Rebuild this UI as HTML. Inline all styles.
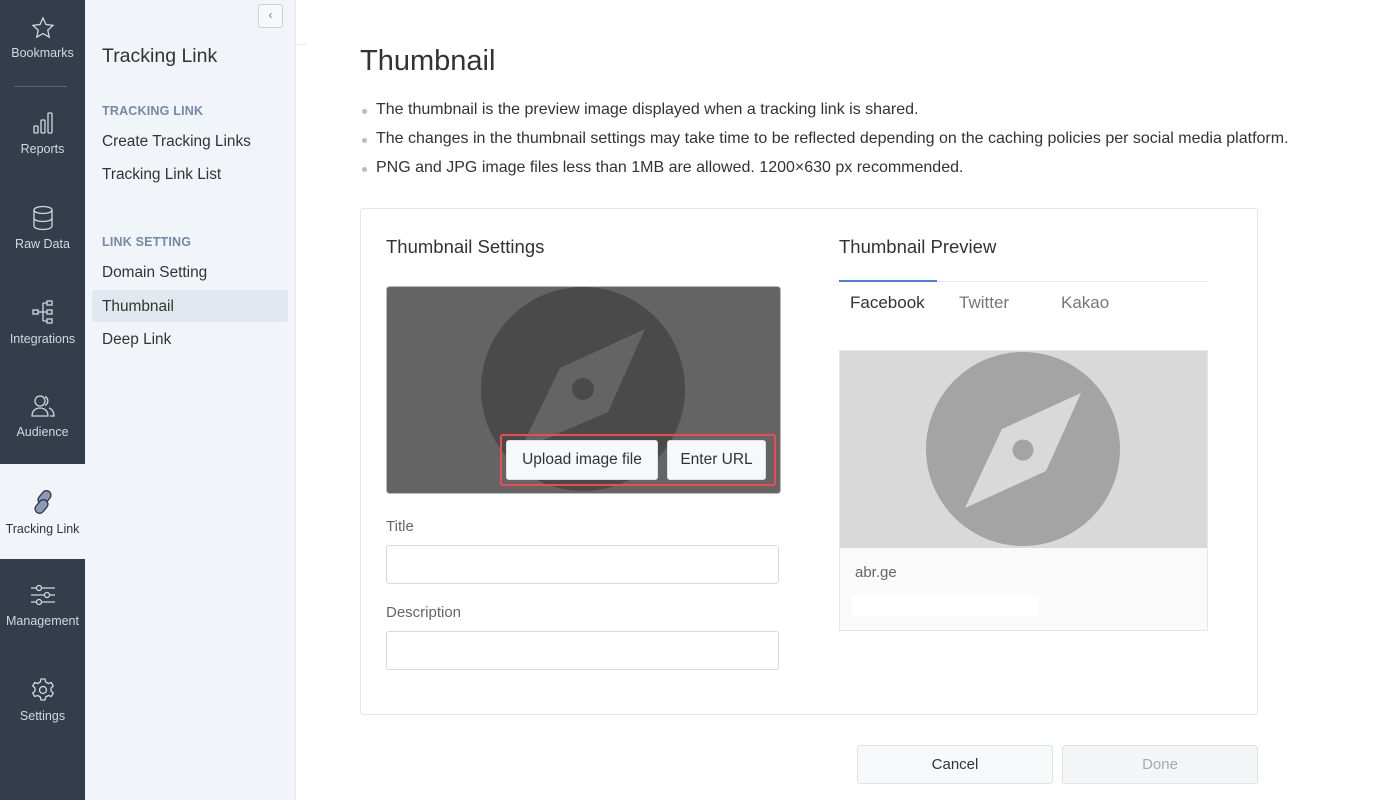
<!DOCTYPE html>
<html><head><meta charset="utf-8"><style>
*{box-sizing:border-box;margin:0;padding:0}
body{width:1400px;height:800px;overflow:hidden;font-family:"Liberation Sans",sans-serif;background:#fff;position:relative;color:#333}
.side{position:absolute;left:0;top:0;width:85px;height:800px;background:#333d4b}
.it{position:absolute;left:0;width:85px;text-align:center;color:#d3d8df;font-size:12.5px}
.it svg{display:block;margin:0 auto 6px}
.act{background:#f1f4f8;color:#333}
.sub{position:absolute;left:85px;top:0;width:211px;height:800px;background:#f1f4f8;border-right:1px solid #e4e8ee}
.sub .h{position:absolute;left:17px;top:45px;font-size:19.5px;color:#333}
.sub .cat{position:absolute;left:17px;font-size:12.5px;color:#7489a8;font-weight:bold;letter-spacing:.2px}
.sub .l{position:absolute;left:17px;font-size:15.4px;color:#333}
.sub .sel{position:absolute;left:7px;top:290px;width:196px;height:32px;background:#e2e8ef;border-radius:3px}
.col{position:absolute;left:258px;top:4px;width:25px;height:24px;border:1px solid #ccd2da;border-radius:3px;background:#f6f8fa;color:#777;font-size:12px;text-align:center;line-height:21px}
h1{position:absolute;left:360px;top:45px;font-size:29px;font-weight:normal;color:#333}
ul{position:absolute;left:360px;top:101px;list-style:none;font-size:16px;color:#333}
ul li{height:29.2px;padding-left:16px;position:relative}
ul li:before{content:"";position:absolute;left:2px;top:8px;width:5px;height:5px;border-radius:50%;background:#bbb}
.card{position:absolute;left:360px;top:208px;width:898px;height:507px;border:1px solid #e3e6ea;border-radius:3px}
.t{position:absolute;font-size:18.5px;color:#333}
.lab{position:absolute;left:386px;font-size:15px;color:#666}
.inp{position:absolute;left:386px;width:393px;height:39px;border:1px solid #d6dae0;border-radius:3px}
.btn{position:absolute;height:40px;border:1px solid #dfe2e6;border-radius:3px;background:#f7f8fa;text-align:center;line-height:38px;font-size:15px}
</style></head><body>
<div class="side">
 <div class="it" style="top:16px"><svg width="24" height="24" viewBox="0 0 24 24" fill="none" stroke="#d3d8df" stroke-width="1.3"><path d="M12 2l3 6.5 7 .8-5.2 4.8 1.4 7L12 17.6 5.8 21.1l1.4-7L2 9.3l7-.8z"/></svg>Bookmarks</div>
 <div style="position:absolute;left:14px;top:86px;width:53px;height:1px;background:#5b6675"></div>
 <div class="it" style="top:110px"><svg width="26" height="26" viewBox="0 0 26 26" fill="none" stroke="#d3d8df" stroke-width="1.3"><rect x="4" y="16" width="4" height="7" rx="1"/><rect x="11" y="10" width="4" height="13" rx="1"/><rect x="18" y="3" width="4" height="20" rx="1"/></svg>Reports</div>
 <div class="it" style="top:205px"><svg width="24" height="26" viewBox="0 0 24 26" fill="none" stroke="#d3d8df" stroke-width="1.3"><ellipse cx="12" cy="5" rx="9" ry="3.5"/><path d="M3 5v16c0 2 4 3.5 9 3.5s9-1.5 9-3.5V5M3 13c0 2 4 3.5 9 3.5s9-1.5 9-3.5"/></svg>Raw Data</div>
 <div class="it" style="top:298px"><svg width="26" height="28" viewBox="0 0 26 28" fill="none" stroke="#d3d8df" stroke-width="1.3"><rect x="3" y="12" width="5" height="4"/><rect x="17" y="3" width="5" height="4"/><rect x="17" y="12" width="5" height="4"/><rect x="17" y="21" width="5" height="4"/><path d="M8 14h5M13 5v18M13 5h4M13 14h4M13 23h4"/></svg>Integrations</div>
 <div class="it" style="top:393px"><svg width="26" height="26" viewBox="0 0 26 26" fill="none" stroke="#d3d8df" stroke-width="1.3"><circle cx="10" cy="8" r="5"/><path d="M2 23c0-5 3.5-8 8-8s8 3 8 8z"/><path d="M15 3.5a5 5 0 0 1 0 9M19 15c3 1 5 4 5 8h-4"/></svg>Audience</div>
 <div class="it act" style="top:464px;height:95px;padding-top:24px"><svg width="28" height="28" viewBox="0 0 28 28"><g fill="#8a9bb5" stroke="#333d4b" stroke-width="1.4"><rect x="11" y="2" width="9" height="15" rx="4.5" transform="rotate(40 15.5 9.5)"/><rect x="8" y="11" width="9" height="15" rx="4.5" transform="rotate(40 12.5 18.5)"/></g></svg>Tracking Link</div>
 <div class="it" style="top:582px"><svg width="28" height="26" viewBox="0 0 28 26" fill="none" stroke="#d3d8df" stroke-width="1.3"><path d="M2 6h24M2 13h24M2 20h24"/><circle cx="10" cy="6" r="2.5" fill="#333d4b"/><circle cx="18" cy="13" r="2.5" fill="#333d4b"/><circle cx="10" cy="20" r="2.5" fill="#333d4b"/></svg>Management</div>
 <div class="it" style="top:677px"><svg width="26" height="26" viewBox="0 0 26 26" fill="none" stroke="#d3d8df" stroke-width="1.3"><path d="M11 2h4l.7 3 2.6 1.5 3-1 2 3.5-2.3 2v3l2.3 2-2 3.5-3-1-2.6 1.5-.7 3h-4l-.7-3-2.6-1.5-3 1-2-3.5 2.3-2v-3l-2.3-2 2-3.5 3 1L10.3 5z"/><circle cx="13" cy="13" r="3.5"/></svg>Settings</div>
</div>
<div class="sub">
 <div class="sel"></div>
 <div class="h">Tracking Link</div>
 <div class="cat" style="top:104px">TRACKING LINK</div>
 <div class="l" style="top:133px">Create Tracking Links</div>
 <div class="l" style="top:166px">Tracking Link List</div>
 <div class="cat" style="top:235px">LINK SETTING</div>
 <div class="l" style="top:264px">Domain Setting</div>
 <div class="l" style="top:298px">Thumbnail</div>
 <div class="l" style="top:331px">Deep Link</div>
</div>
<div class="col">&#8249;</div>
<div style="position:absolute;left:296px;top:44px;width:10px;height:1px;background:#e4e8ee"></div>
<h1>Thumbnail</h1>
<ul>
<li>The thumbnail is the preview image displayed when a tracking link is shared.</li>
<li>The changes in the thumbnail settings may take time to be reflected depending on the caching policies per social media platform.</li>
<li>PNG and JPG image files less than 1MB are allowed. 1200×630 px recommended.</li>
</ul>
<div class="card"></div>
<div class="t" style="left:386px;top:236px">Thumbnail Settings</div>
<div class="t" style="left:839px;top:236px">Thumbnail Preview</div>
<svg style="position:absolute;left:386px;top:286px" width="395" height="208">
 <rect x="0.5" y="0.5" width="394" height="207" rx="3" fill="#646464" stroke="#bbb"/>
 <circle cx="197" cy="103" r="102" fill="#4a4a4a"/>
 <polygon points="259,43 174,82 134,164 222,126" fill="#646464"/>
 <circle cx="197" cy="103" r="11" fill="#4a4a4a"/>
</svg>
<div style="position:absolute;left:500px;top:434px;width:276px;height:52px;border:2px solid #ee4b50;border-radius:3px"></div>
<div class="btn" style="left:506px;top:440px;width:152px;background:#f7f8fa;color:#333;font-size:15.5px">Upload image file</div>
<div class="btn" style="left:667px;top:440px;width:99px;color:#333;font-size:15.5px">Enter URL</div>
<div class="lab" style="top:518px">Title</div>
<div class="inp" style="top:545px"></div>
<div class="lab" style="top:604px">Description</div>
<div class="inp" style="top:631px"></div>
<div style="position:absolute;left:839px;top:281px;width:369px;height:1px;background:#e6e9ed"></div>
<div style="position:absolute;left:839px;top:280px;width:98px;height:2px;background:#4a7ee6"></div>
<div style="position:absolute;left:850px;top:293px;font-size:17px;color:#333">Facebook</div>
<div style="position:absolute;left:959px;top:293px;font-size:17px;color:#777">Twitter</div>
<div style="position:absolute;left:1061px;top:293px;font-size:17px;color:#777">Kakao</div>
<div style="position:absolute;left:839px;top:350px;width:369px;height:281px;border:1px solid #e3e6ea;background:#fafafa"></div>
<svg style="position:absolute;left:840px;top:351px" width="367" height="197">
 <rect width="367" height="197" fill="#d9d9d9"/>
 <circle cx="183" cy="98" r="97" fill="#a4a4a4"/>
 <polygon points="241,42 162,78 125,157 206,120" fill="#d9d9d9"/>
 <circle cx="183" cy="99" r="10.5" fill="#a4a4a4"/>
</svg>
<div style="position:absolute;left:855px;top:564px;font-size:15px;color:#666">abr.ge</div>
<div style="position:absolute;left:852px;top:595px;width:187px;height:21px;background:#fff"></div>
<div class="btn" style="left:857px;top:745px;width:196px;height:39px;color:#333">Cancel</div>
<div class="btn" style="left:1062px;top:745px;width:196px;height:39px;color:#aaa;background:#f4f5f7">Done</div>
</body></html>
